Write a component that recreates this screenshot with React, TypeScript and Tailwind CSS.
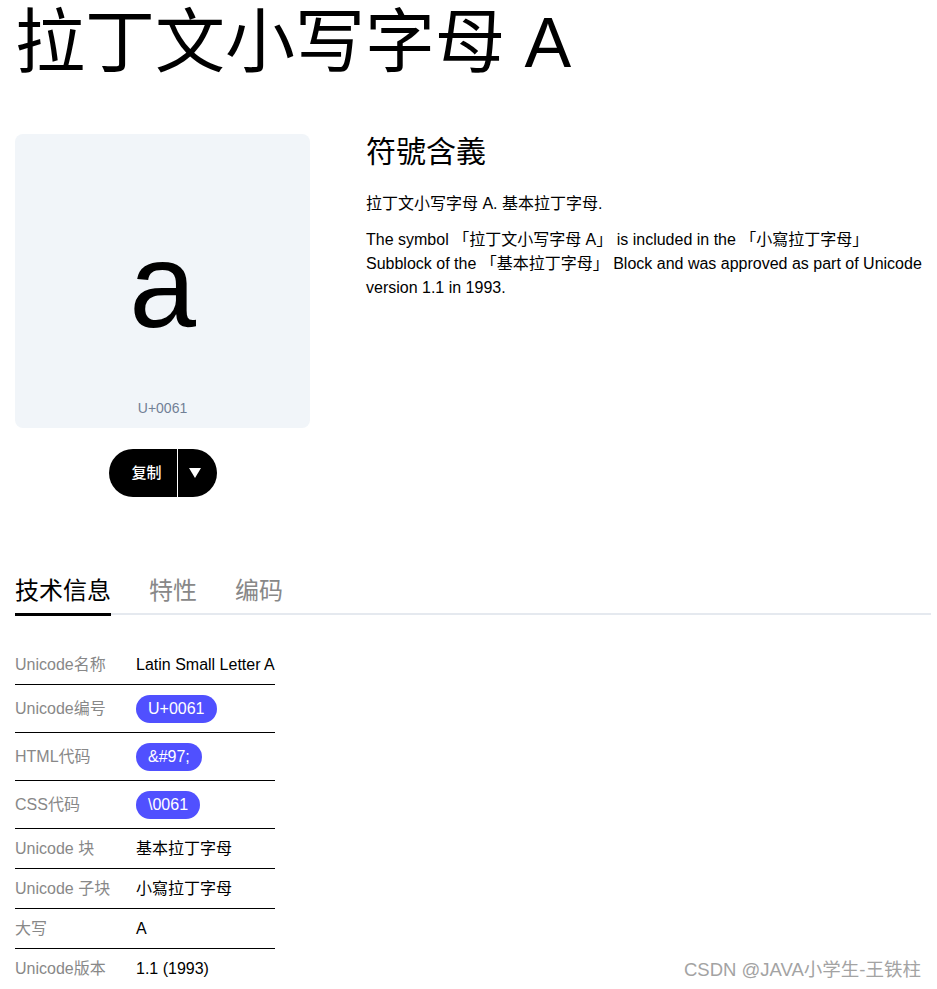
import React from 'react'

const font = "font-['Liberation_Sans','Noto_Sans_CJK_SC',sans-serif]"

interface InfoRow {
  label: string
  value: string
  pill?: boolean
}

const rows: InfoRow[] = [
  { label: 'Unicode名称', value: 'Latin Small Letter A' },
  { label: 'Unicode编号', value: 'U+0061', pill: true },
  { label: 'HTML代码', value: '&#97;', pill: true },
  { label: 'CSS代码', value: '\\0061', pill: true },
  { label: 'Unicode 块', value: '基本拉丁字母' },
  { label: 'Unicode 子块', value: '小寫拉丁字母' },
  { label: '大写', value: 'A' },
  { label: 'Unicode版本', value: '1.1 (1993)' },
]

function GlyphCard() {
  return (
    <div className="w-[295px] shrink-0">
      <div className="h-[294px] bg-[#f1f5f9] rounded-lg flex flex-col items-center">
        <div className="pt-[91px] text-[120px] leading-none text-black">a</div>
        <div className="mt-auto pb-[10px] text-[14px] leading-5 text-[#718096]">U+0061</div>
      </div>

      {/* Copy button */}
      <div className="flex justify-center mt-[21px]">
        <div className="flex h-12 bg-black rounded-full text-white overflow-hidden">
          <button className="w-[68px] flex items-center justify-center pl-2 text-[15px] font-medium">
            复制
          </button>
          <span className="w-px bg-white self-stretch" />
          <button className="w-[39px] flex items-center justify-center pr-1">
            <svg width="12" height="10" viewBox="0 0 12 10">
              <polygon points="0,0 12,0 6,10" fill="white" />
            </svg>
          </button>
        </div>
      </div>
    </div>
  )
}

function Meaning() {
  return (
    <div className="flex-1 text-black">
      <h2 className="text-3xl leading-9">符號含義</h2>
      <p className="mt-[22px] text-base leading-6">拉丁文小写字母 A. 基本拉丁字母.</p>
      <p className="mt-3 text-base leading-6">
        The symbol 「拉丁文小写字母 A」 is included in the 「小寫拉丁字母」 Subblock of the 「基本拉丁字母」
        Block and was approved as part of Unicode version 1.1 in 1993.
      </p>
    </div>
  )
}

function Tabs() {
  const tabs = ['技术信息', '特性', '编码']
  return (
    <div className="mt-[78px] flex gap-[38px] border-b-2 border-[#e5e9ef]">
      {tabs.map((t, i) => (
        <div
          key={t}
          className={
            i === 0
              ? 'text-2xl leading-8 pb-[6px] border-b-[3px] border-black -mb-[3px] text-black'
              : 'text-2xl leading-8 pb-[6px] border-b-[3px] border-transparent -mb-[3px] text-[#888]'
          }
        >
          {t}
        </div>
      ))}
    </div>
  )
}

function InfoTable() {
  return (
    <div className="mt-[30px] w-[260px]">
      {rows.map((r, i) => (
        <div
          key={r.label}
          className={[
            'flex items-center',
            r.pill ? 'h-12' : 'h-10',
            i < rows.length - 1 ? 'border-b border-black' : '',
          ].join(' ')}
        >
          <div className="w-[121px] shrink-0 text-base leading-5 text-[#888]">{r.label}</div>
          {r.pill ? (
            <span className="inline-flex items-center h-7 px-3 rounded-full bg-[#5050ff] text-white text-base leading-5">
              {r.value}
            </span>
          ) : (
            <div className="text-base leading-5 text-black">{r.value}</div>
          )}
        </div>
      ))}
    </div>
  )
}

export default function App() {
  return (
    <div className={`relative min-h-[989px] bg-white pl-[15px] pr-[6px] ${font}`}>
      <h1 className="text-[70px] leading-[86px] text-black font-normal">拉丁文小写字母 A</h1>

      <div className="mt-[48px] flex gap-[56px]">
        <GlyphCard />
        <Meaning />
      </div>

      <Tabs />
      <InfoTable />

      {/* watermark */}
      <div className="absolute right-[16px] bottom-[7px] text-[18.5px] leading-6 text-[#a3a3a3]">
        CSDN @JAVA小学生-王铁柱
      </div>
    </div>
  )
}
